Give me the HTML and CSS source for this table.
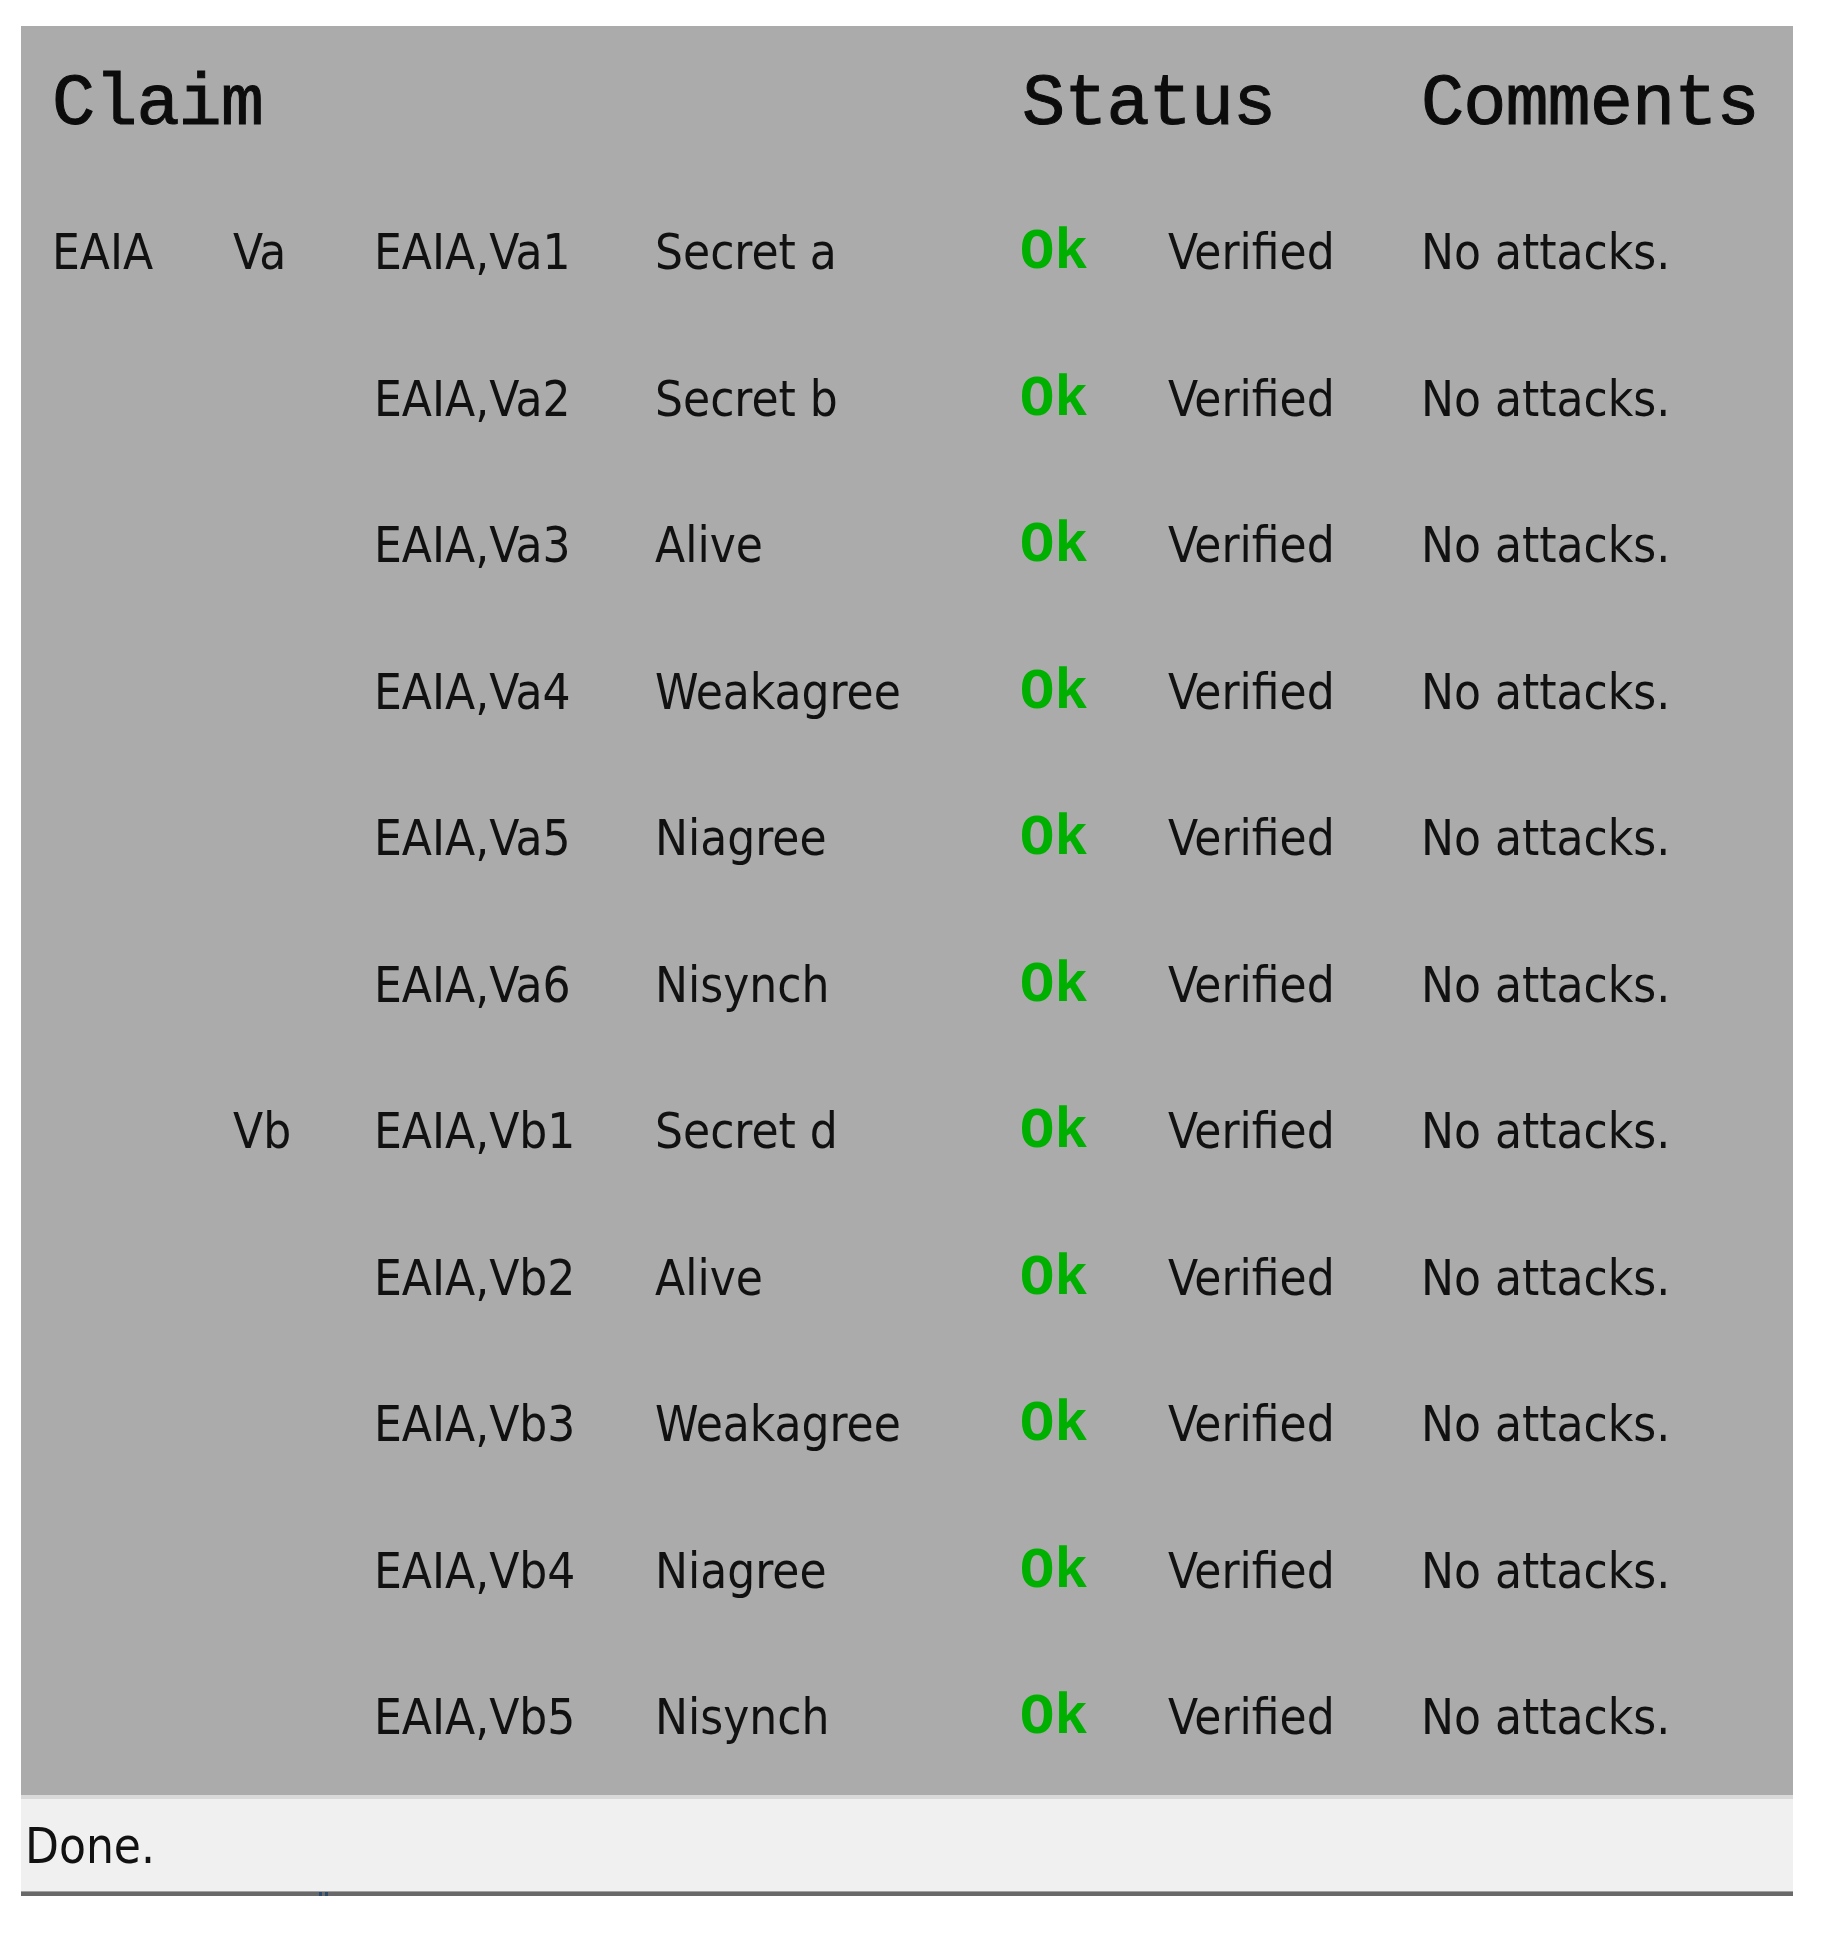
FILE: index.html
```html
<!DOCTYPE html>
<html>
<head>
<meta charset="utf-8">
<link rel="stylesheet" href="styles.css">
</head>
<body>
<div class="window">
  <div class="panel">
    <div class="head">
      <div class="h-claim">Claim</div>
      <div class="h-status">Status</div>
      <div class="h-comments">Comments</div>
    </div>
    <div class="grid">
      <div class="c">EAIA</div><div class="c">Va</div><div class="c">EAIA,Va1</div><div class="c">Secret a</div><div class="ok">Ok</div><div class="c">Verified</div><div class="c">No attacks.</div>
      <div class="c"></div><div class="c"></div><div class="c">EAIA,Va2</div><div class="c">Secret b</div><div class="ok">Ok</div><div class="c">Verified</div><div class="c">No attacks.</div>
      <div class="c"></div><div class="c"></div><div class="c">EAIA,Va3</div><div class="c">Alive</div><div class="ok">Ok</div><div class="c">Verified</div><div class="c">No attacks.</div>
      <div class="c"></div><div class="c"></div><div class="c">EAIA,Va4</div><div class="c">Weakagree</div><div class="ok">Ok</div><div class="c">Verified</div><div class="c">No attacks.</div>
      <div class="c"></div><div class="c"></div><div class="c">EAIA,Va5</div><div class="c">Niagree</div><div class="ok">Ok</div><div class="c">Verified</div><div class="c">No attacks.</div>
      <div class="c"></div><div class="c"></div><div class="c">EAIA,Va6</div><div class="c">Nisynch</div><div class="ok">Ok</div><div class="c">Verified</div><div class="c">No attacks.</div>
      <div class="c"></div><div class="c">Vb</div><div class="c">EAIA,Vb1</div><div class="c">Secret d</div><div class="ok">Ok</div><div class="c">Verified</div><div class="c">No attacks.</div>
      <div class="c"></div><div class="c"></div><div class="c">EAIA,Vb2</div><div class="c">Alive</div><div class="ok">Ok</div><div class="c">Verified</div><div class="c">No attacks.</div>
      <div class="c"></div><div class="c"></div><div class="c">EAIA,Vb3</div><div class="c">Weakagree</div><div class="ok">Ok</div><div class="c">Verified</div><div class="c">No attacks.</div>
      <div class="c"></div><div class="c"></div><div class="c">EAIA,Vb4</div><div class="c">Niagree</div><div class="ok">Ok</div><div class="c">Verified</div><div class="c">No attacks.</div>
      <div class="c"></div><div class="c"></div><div class="c">EAIA,Vb5</div><div class="c">Nisynch</div><div class="ok">Ok</div><div class="c">Verified</div><div class="c">No attacks.</div>
    </div>
  </div>
  <div class="status">Done.</div>
</div>
</body>
</html>
```
FILE: styles.css
```css
html, body {
  margin: 0;
  padding: 0;
  background: #ffffff;
}
body {
  padding: 26px 0 0 21px;
}
.window {
  width: 1772px;
}
.panel {
  background: #ababab;
  padding-left: 31px;
  box-sizing: border-box;
  border-bottom: 4px solid #d9d9d9;
  height: 1773px;
}
.head {
  display: grid;
  grid-template-columns: 968px 401px 1fr;
  font-family: "Liberation Mono", "Courier New", monospace;
  font-size: 72px;
  line-height: 72px;
  color: #0c0c0c;
  padding-top: 43px;
  height: 154px;
  box-sizing: border-box;
  letter-spacing: -1px;
  -webkit-text-stroke: 1px #0c0c0c;
}
.h-status {
  padding-left: 2px;
}
.grid {
  display: grid;
  grid-template-columns: 181px 141px 281px 365px 148px 253px 1fr;
  grid-auto-rows: 146.5px;
  font-family: "DejaVu Sans Condensed", "Liberation Sans Narrow", "DejaVu Sans", sans-serif;
  font-size: 49px;
  line-height: 146.5px;
  color: #111111;
}
.c {
  white-space: nowrap;
}
.ok {
  font-family: "Liberation Mono", "Courier New", monospace;
  font-weight: bold;
  font-size: 57px;
  color: #00b000;
  white-space: nowrap;
}
.status {
  position: relative;
  background: #f0f0f0;
  height: 97px;
  box-sizing: border-box;
  padding: 3px 0 0 4px;
  font-family: "DejaVu Sans Condensed", "Liberation Sans Narrow", "DejaVu Sans", sans-serif;
  font-size: 49px;
  line-height: 89px;
  color: #111111;
  border-bottom: 4px solid #696969;
  box-shadow: inset 0 -1px 0 #a0a0a0;
}
.status::after {
  content: "";
  position: absolute;
  left: 298px;
  bottom: -4px;
  width: 3px;
  height: 4px;
  background: #2a4a6a;
  box-shadow: 6px 0 0 #2a4a6a;
}
```
